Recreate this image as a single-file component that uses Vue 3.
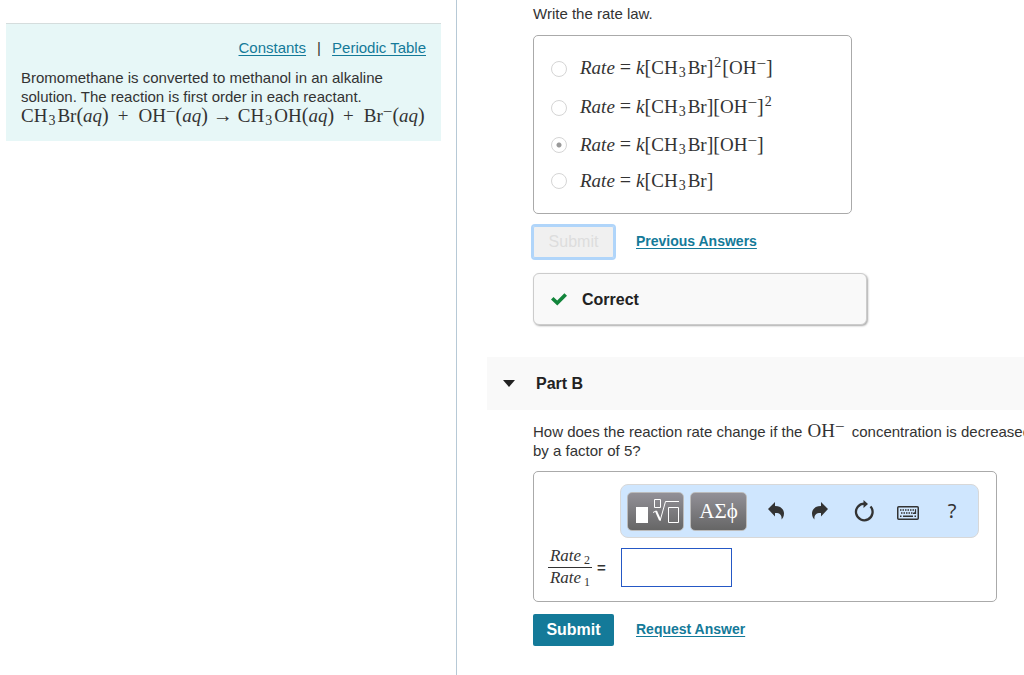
<script setup>
import { ref } from 'vue'

const selected = ref(2)
const answer = ref('')

const r = (t) => ({ t, c: 'rm' })
const i = (t) => ({ t, c: 'it' })
const b = (t) => ({ t, c: 'br' })
const sub = (t) => ({ t, c: 'low' })
const sup = (t) => ({ t, c: 'high' })
const minus = { t: '−', c: 'minus' }
const op = (t) => ({ t, c: 'op' })
const rel = (t) => ({ t, c: 'rel' })

const aq = [b('('), i('aq'), b(')')]
const reaction = [
  r('CH'), sub('3'), r('Br'), ...aq, op('+'),
  r('OH'), minus, ...aq, rel('→'),
  r('CH'), sub('3'), r('OH'), ...aq, op('+'),
  r('Br'), minus, ...aq,
]

const rate = [i('Rate'), rel('='), i('k')]
const bromo = [b('['), r('CH'), sub('3'), r('Br'), b(']')]
const hydroxide = [b('['), r('OH'), minus, b(']')]
const options = [
  { squared: true, parts: [...rate, ...bromo, sup('2'), ...hydroxide] },
  { squared: true, parts: [...rate, ...bromo, ...hydroxide, sup('2')] },
  { squared: false, parts: [...rate, ...bromo, ...hydroxide] },
  { squared: false, parts: [...rate, ...bromo] },
]
</script>

<template>
  <div class="page">
    <aside class="side">
      <section class="intro">
        <nav class="refs">
          <a href="#constants">Constants</a>
          <span class="bar">|</span>
          <a href="#table">Periodic Table</a>
        </nav>
        <p>Bromomethane is converted to methanol in an alkaline solution. The reaction is first order in each reactant.</p>
        <div class="math reaction">
          <span v-for="(p, n) in reaction" :key="n" :class="p.c">{{ p.t }}</span>
        </div>
      </section>
    </aside>

    <main class="main">
      <section class="part">
        <p>Write the rate law.</p>
        <div class="choices" role="radiogroup" aria-label="Rate law">
          <label v-for="(o, k) in options" :key="k" class="choice" :class="{ squared: o.squared }">
            <input v-model="selected" type="radio" name="law" :value="k" />
            <span class="math">
              <span v-for="(p, n) in o.parts" :key="n" :class="p.c">{{ p.t }}</span>
            </span>
          </label>
        </div>
        <div class="actions">
          <button type="button" class="submit done" disabled>Submit</button>
          <a href="#previous">Previous Answers</a>
        </div>
        <div class="feedback">
          <svg width="16" height="14" viewBox="0 0 16 14" aria-hidden="true">
            <path d="M0 7.600 2.500 5l3.700 3.500L13.400 1.200 16 3.800 6.300 13.400z" fill="#12853b" />
          </svg>
          <strong>Correct</strong>
        </div>
      </section>

      <h2 class="heading">
        <svg width="12" height="7" viewBox="0 0 12 7" aria-hidden="true"><path d="M0 0h12L6 7z" fill="#222" /></svg>
        Part B
      </h2>

      <section class="part second">
        <p class="question">
          How does the reaction rate change if the
          <span class="math ion"><span class="rm">OH</span><span class="minus">−</span></span>
          concentration is decreased<br />by a factor of 5?
        </p>
        <div class="entry">
          <div class="toolbar" role="toolbar" aria-label="Math tools">
            <button type="button" class="tile" aria-label="Templates">
              <svg width="55" height="37" viewBox="0 0 55 37" fill="none" stroke="#fff">
                <path d="M8 14h12v16H8z" fill="#fff" stroke="none" />
                <path d="M26.500 6.500h6v8h-6zM40.500 14.500h10v15h-10z" />
                <path d="M25 19.500l3-1.500" />
                <path d="M28 18l4 9" stroke-width="2" />
                <path d="M32 28 37.500 8.500H51" />
              </svg>
            </button>
            <button type="button" class="tile greek">ΑΣϕ</button>
            <button type="button" class="tool" aria-label="Undo">
              <svg width="16" height="18" viewBox="0 0 16 18" fill="#333"><path d="M0 7 7 0v4c6 0 9 3.500 9 7.500 0 3-1.300 4.800-2.500 6 .5-4-1-6.700-6.500-6.500v3.500z" /></svg>
            </button>
            <button type="button" class="tool" aria-label="Redo">
              <svg width="16" height="18" viewBox="0 0 16 18" fill="#333"><path d="M16 7 9 0v4C3 4 0 7.500 0 11.500c0 3 1.300 4.800 2.500 6-.5-4 1-6.700 6.500-6.500v3.500z" /></svg>
            </button>
            <button type="button" class="tool" aria-label="Reset">
              <svg width="20" height="22" viewBox="0 0 20 22"><path d="M10.500 3.700A8.300 8.300 0 1 0 16.500 6.500" fill="none" stroke="#333" stroke-width="2.300" /><path d="M9.500 0 14 4 9.500 8z" fill="#333" /></svg>
            </button>
            <button type="button" class="tool" aria-label="Keyboard">
              <svg class="keys" width="22" height="14" viewBox="0 0 22 14" fill="none" stroke="#333">
                <rect x=".75" y=".75" width="20.500" height="12.500" rx="1" stroke-width="1.500" />
                <path d="M3 4h16M4 7h14" stroke-width="1.500" stroke-dasharray="1.500 1" />
                <path d="M18.500 3.500v4H16" stroke-width="1.200" />
                <path d="M3 10.200h1.500M6 10.200h10M17.500 10.200H19" stroke-width="1.500" />
              </svg>
            </button>
            <button type="button" class="tool help" aria-label="Help">?</button>
          </div>
          <div class="formula">
            <label class="ratio" for="ratio">
              <span class="fraction">
                <span class="math"><span class="it">Rate</span><span class="low">2</span></span>
                <span class="math"><span class="it">Rate</span><span class="low">1</span></span>
              </span>
              <b>=</b>
            </label>
            <input id="ratio" v-model="answer" type="text" />
          </div>
        </div>
        <div class="actions">
          <button type="button" class="submit">Submit</button>
          <a href="#request">Request Answer</a>
        </div>
      </section>
    </main>
  </div>
</template>

<style>
body { margin: 0; background: #fff; overflow: hidden; }
</style>

<style scoped>
.page {
  display: grid;
  grid-template-columns: 457px minmax(0, 1fr);
  min-height: 100vh;
  color: #333;
  font: 15px/19px "Liberation Sans", Arial, sans-serif;
}
p { margin: 0; }
a { color: #147a99; text-decoration: underline; text-underline-offset: 2px; }
.side { box-sizing: border-box; border-right: 1px solid #b7c9d6; padding: 23px 15px 0 6px; }
.intro { background: #e7f7f7; border-top: 1px solid #d5dddd; padding: 14px 15px 14px 15px; }
.refs { display: flex; justify-content: flex-end; margin-bottom: 11px; }
.bar { width: 26px; text-align: center; }

.math { display: inline-flex; align-items: baseline; font: 19px/20px "Liberation Serif", "Times New Roman", serif; white-space: nowrap; }
.it { font-style: italic; }
.br { font-size: 20px; }
.low { font-size: 14px; position: relative; top: 3px; margin: 0 2px 0 1px; }
.high { font-size: 14px; position: relative; top: -7px; margin: 0 1px; }
.minus { font-size: 17px; position: relative; top: -5px; }
.op { margin: 0 10px 0 9px; }
.rel { margin: 0 5px; font-size: 20px; }
.reaction { display: flex; line-height: 18px; }

.main { overflow: hidden; padding-left: 30px; }
.part { padding: 4px 27px 0 46px; }
.choices {
  box-sizing: border-box; width: 319px; margin-top: 12px; padding: 17px 16px 18px;
  border: 1px solid #aaa; border-radius: 5px; display: grid; gap: 8px;
}
.choice { display: flex; align-items: center; height: 28px; }
.choice.squared { height: 31px; }
.choice input {
  appearance: none; box-sizing: border-box; width: 16px; height: 16px; margin: 0 13px 0 1px;
  border: 1px solid #d5d5d5; border-radius: 50%; background: #fff;
}
.choice input:checked { background: radial-gradient(circle, #999 2px, #fff 3px); }
.actions { display: flex; align-items: center; gap: 22px; margin-top: 12px; font-size: 14px; line-height: 18px; font-weight: bold; }
.actions a { padding-bottom: 2px; }
.submit {
  width: 81px; height: 32px; padding: 0; border: 0; border-radius: 2px;
  background: #147a99; color: #fff; font: bold 16px/20px "Liberation Sans", Arial, sans-serif;
}
.submit.done { background: #f0f0f0; color: #ddd; font-weight: normal; box-shadow: 0 0 0 2px #b0d5fa, inset 0 0 0 1px #b0d5fa; }
.feedback {
  box-sizing: border-box; display: flex; align-items: center; gap: 15px;
  width: 334px; height: 52px; margin-top: 15px; padding-left: 17px;
  background: #f9f9f9; border: 1px solid #ccc; border-radius: 6px;
  box-shadow: 1px 1px 2px #aaa; color: #222; font-size: 16px;
}
.heading {
  display: flex; align-items: center; gap: 21px; height: 53px; margin: 32px 0 0; padding-left: 16px;
  background: #f9f9f9; color: #222; font-size: 16px; line-height: 20px;
}
.second { padding-top: 12px; }
.question { white-space: nowrap; }
.ion { margin: 0 3px 0 1px; line-height: 16px; }
.entry {
  box-sizing: border-box; margin-top: 11px; padding: 12px 17px 12px 14px;
  border: 1px solid #aaa; border-radius: 5px;
}
.toolbar {
  box-sizing: border-box; display: flex; align-items: center; height: 54px; margin-left: 72px; padding-left: 6px;
  background: #cfe6fe; border: 1px solid #d8d8d8; border-radius: 8px;
}
.toolbar button { padding: 0; border: 0; background: none; color: #333; }
.toolbar .tile {
  box-sizing: border-box; width: 57px; height: 39px; margin-right: 6px; border: 1px solid #bbb; border-radius: 5px;
  background: linear-gradient(#929097, #666); color: #fff; font: 21px/20px "Liberation Serif", serif;
}
.tile svg { display: block; }
.tool { display: flex; align-items: center; justify-content: center; width: 44px; height: 40px; }
.toolbar .greek { margin-right: 7px; }
.toolbar .help { font: 20px/20px "Noto Sans", sans-serif; }
.keys { margin-top: 4px; }
.formula { display: flex; align-items: center; margin-top: 8px; }
.ratio { display: flex; align-items: center; gap: 5px; width: 73px; }
.ratio b { font-size: 15px; }
.fraction { width: 44px; }
.fraction .math { display: flex; justify-content: center; font-size: 17px; line-height: 19px; }
.fraction .math + .math { border-top: 1px solid #333; }
.fraction .low { font-size: 12px; margin: 0 0 0 3px; }
.formula input { box-sizing: border-box; width: 111px; height: 39px; padding: 0 6px; border: 1px solid #2558c5; border-radius: 0; background: #fff; font-size: 16px; }
</style>
